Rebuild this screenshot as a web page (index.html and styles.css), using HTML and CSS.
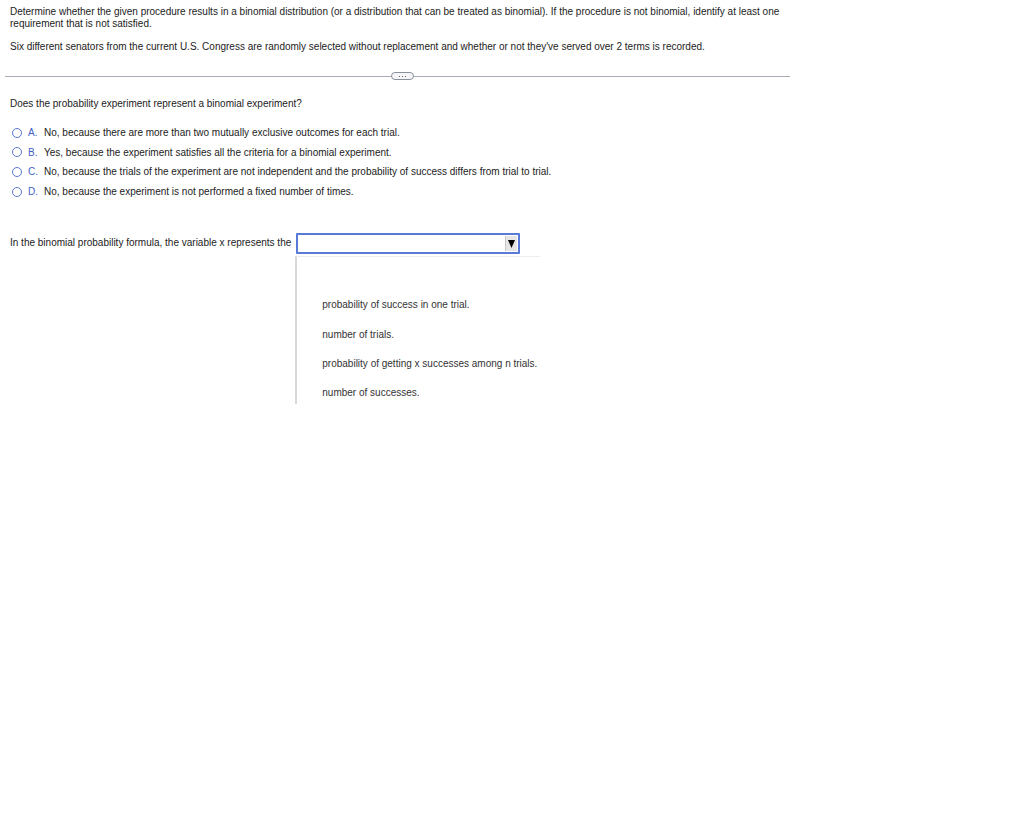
FILE: index.html
```html
<!DOCTYPE html>
<html>
<head>
<meta charset="utf-8">
<link rel="stylesheet" href="styles.css">
</head>
<body>
<div class="page">
  <div class="intro">
    <p class="p1">Determine whether the given procedure results in a binomial distribution (or a distribution that can be treated as binomial). If the procedure is not binomial, identify at least one requirement that is not satisfied.</p>
    <p class="p2">Six different senators from the current U.S. Congress are randomly selected without replacement and whether or not they've served over 2 terms is recorded.</p>
  </div>
  <div class="divider">
    <span class="line line-left"></span>
    <span class="more"><i></i><i></i><i></i></span>
    <span class="line line-right"></span>
  </div>
  <p class="question">Does the probability experiment represent a binomial experiment?</p>
  <ul class="options">
    <li><span class="radio"></span><span class="letter">A.</span><span>No, because there are more than two mutually exclusive outcomes for each trial.</span></li>
    <li><span class="radio"></span><span class="letter">B.</span><span>Yes, because the experiment satisfies all the criteria for a binomial experiment.</span></li>
    <li><span class="radio"></span><span class="letter">C.</span><span>No, because the trials of the experiment are not independent and the probability of success differs from trial to trial.</span></li>
    <li><span class="radio"></span><span class="letter">D.</span><span>No, because the experiment is not performed a fixed number of times.</span></li>
  </ul>
  <div class="fill">
    <span class="fill-label">In the binomial probability formula, the variable x represents the</span>
    <div class="select-wrap">
      <div class="select"><span class="arrow"><svg width="7" height="8" viewBox="0 0 7 8"><path d="M0 0 H7 L3.5 8 Z" fill="#000"/></svg></span></div>
      <div class="menu">
        <div class="item">probability of success in one trial.</div>
        <div class="item">number of trials.</div>
        <div class="item">probability of getting x successes among n trials.</div>
        <div class="item">number of successes.</div>
      </div>
    </div>
  </div>
</div>
</body>
</html>
```
FILE: styles.css
```css
html, body {
  margin: 0;
  padding: 0;
  background: #fff;
}
body {
  font-family: "Liberation Sans", Arial, sans-serif;
  font-size: 10px;
  color: #222;
}
.page {
  width: 1024px;
}
p { margin: 0; }
.intro {
  padding: 6px 228px 0 10px;
}
.p1 {
  line-height: 12px;
}
.p2 {
  margin-top: 11px;
  line-height: 12px;
}
.divider {
  display: flex;
  align-items: center;
  margin: 18px 0 0 5px;
  width: 785px;
  height: 10px;
}
.line {
  height: 1px;
  background: #a9abb5;
}
.line-left { width: 386px; }
.line-right { flex: 1; }
.more {
  width: 21px;
  height: 6px;
  border: 1px solid #8a8f9c;
  border-radius: 4px;
  background: #f6f6f8;
  display: flex;
  justify-content: center;
  align-items: center;
  gap: 2px;
}
.more i {
  width: 1px;
  height: 1px;
  background: #666;
}
.question {
  margin: 17px 0 0 10px;
  line-height: 12px;
}
.options {
  list-style: none;
  margin: 13px 0 0 0;
  padding: 0 0 0 12px;
}
.options li {
  display: flex;
  align-items: center;
  height: 19.6px;
}
.radio {
  width: 8px;
  height: 8px;
  border: 1px solid #5b78d0;
  border-radius: 50%;
  margin-right: 6px;
}
.letter {
  color: #3e5fc4;
  width: 16px;
}
.fill {
  display: flex;
  align-items: flex-start;
  margin: 32px 0 0 10px;
}
.fill-label {
  margin-top: 4px;
  margin-right: 5px;
  line-height: 12px;
}
.select-wrap {
  width: 244px;
}
.select {
  width: 220px;
  height: 17px;
  border: 2px solid #5a7ad9;
  border-radius: 1px;
  display: flex;
  justify-content: flex-end;
  align-items: center;
  box-sizing: content-box;
}
.arrow {
  width: 11px;
  height: 15px;
  background: #e6e6e6;
  border-left: 1px solid #c9c9c9;
  display: flex;
  justify-content: center;
  align-items: center;
  margin-right: 1px;
}
.menu {
  margin-top: 2px;
  margin-left: -1px;
  border-top: 1px solid #eeeeee;
  border-left: 2px solid #d8d8d8;
  padding: 42px 0 6px 25px;
  height: 99px;
}
.item {
  line-height: 12px;
  height: 29.3px;
  color: #333;
}
```
